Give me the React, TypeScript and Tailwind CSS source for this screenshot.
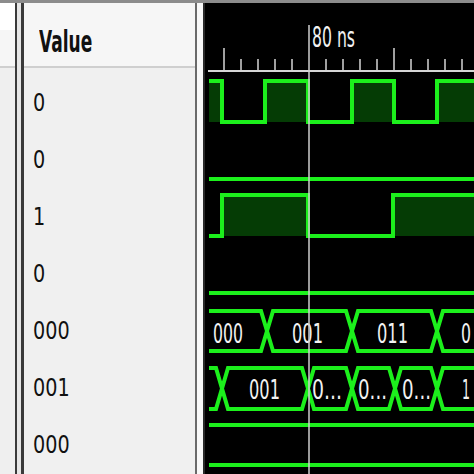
import React from "react";

const values = ["0", "0", "1", "0", "000", "001", "000"];

const GREEN = "#1cf01c";
const FILL = "#053c05";

// bus helper: two polylines that swap level at every crossing, forming the X shapes
const busPath = (top: number, bot: number, start: number, end: number, xs: number[]) => {
  const h = 6;
  const line = (first: number, second: number) => {
    let cur = first;
    let other = second;
    let d = `M${start} ${cur} `;
    xs.forEach((c) => {
      d += `H${c - h} L${c + h} ${other} `;
      [cur, other] = [other, cur];
    });
    return d + `H${end} `;
  };
  return line(top, bot) + line(bot, top);
};

const Waves = () => {
  const ticks = Array.from({ length: 15 }, (_, k) => 224 + 17 * k);
  return (
    <svg width={269} height={471} viewBox="205 3 269 471" className="block">
      {/* ruler */}
      <line x1={208} y1={71} x2={474} y2={71} stroke="#d6d6d6" strokeWidth={2} />
      {ticks.map((x, k) =>
        k === 5 ? null : (
          <line
            key={x}
            x1={x}
            y1={k === 0 || k === 10 ? 48 : 59}
            x2={x}
            y2={71}
            stroke="#d6d6d6"
            strokeWidth={1.5}
          />
        )
      )}

      {/* row 1 clock */}
      {[
        [209, 222],
        [265, 308],
        [352, 394],
        [437, 474],
      ].map(([a, b]) => (
        <rect key={a} x={a} y={81} width={b - a} height={41} fill={FILL} />
      ))}
      <path
        d="M209 81 H222 V122 H265 V81 H308 V122 H352 V81 H394 V122 H437 V81 H474"
        fill="none"
        stroke={GREEN}
        strokeWidth={4}
      />

      {/* row 2 */}
      <line x1={209} y1={179} x2={474} y2={179} stroke={GREEN} strokeWidth={4} />

      {/* row 3 */}
      <rect x={222} y={195} width={86} height={41} fill={FILL} />
      <rect x={393} y={195} width={81} height={41} fill={FILL} />
      <path
        d="M209 236 H222 V195 H308 V236 H393 V195 H474"
        fill="none"
        stroke={GREEN}
        strokeWidth={4}
      />

      {/* row 4 */}
      <line x1={209} y1={293} x2={474} y2={293} stroke={GREEN} strokeWidth={4} />

      {/* row 5 bus */}
      <path d={busPath(311, 351, 209, 474, [267, 352, 437])} fill="none" stroke={GREEN} strokeWidth={4} />
      {/* row 6 bus */}
      <path d={busPath(368, 409, 209, 474, [222, 308, 352, 395, 437])} fill="none" stroke={GREEN} strokeWidth={4} />
      {/* row 7 */}
      <line x1={209} y1={425} x2={474} y2={425} stroke={GREEN} strokeWidth={4} />
      <line x1={209} y1={465} x2={474} y2={465} stroke={GREEN} strokeWidth={4} />

      <g fill="#f2f2f2" fontFamily="'DejaVu Sans', sans-serif" fontSize={26}>
        <text x={213} y={343} textLength={30} lengthAdjust="spacingAndGlyphs">000</text>
        <text x={292} y={343} textLength={31} lengthAdjust="spacingAndGlyphs">001</text>
        <text x={377} y={343} textLength={31} lengthAdjust="spacingAndGlyphs">011</text>
        <text x={461} y={343} textLength={10} lengthAdjust="spacingAndGlyphs">0</text>

        <text x={249} y={399} textLength={31} lengthAdjust="spacingAndGlyphs">001</text>
        <text x={312} y={399} textLength={30} lengthAdjust="spacingAndGlyphs">0...</text>
        <text x={358} y={399} textLength={29} lengthAdjust="spacingAndGlyphs">0...</text>
        <text x={402} y={399} textLength={29} lengthAdjust="spacingAndGlyphs">0...</text>
        <text x={462} y={399} textLength={8} lengthAdjust="spacingAndGlyphs">1</text>

        <text x={312} y={47} fontSize={28} textLength={43} lengthAdjust="spacingAndGlyphs">80 ns</text>
      </g>

      {/* cursor */}
      <line x1={309} y1={25} x2={309} y2={474} stroke="#cfcfcf" strokeWidth={1.5} />
    </svg>
  );
};

export default function App() {
  return (
    <div className="w-[474px] h-[474px] overflow-hidden bg-[#f0f0f0] flex flex-col" style={{ fontFamily: "'DejaVu Sans', sans-serif" }}>
      <div className="h-[3px] bg-[#8c8c8c]" />
      <div className="flex flex-1">
        {/* name column (mostly cut off) */}
        <div className="w-[15px] flex flex-col">
          <div className="h-[27px] bg-white" />
          <div className="h-[38px] bg-[#f6f6f6] border-b-2 border-[#cfcfcf]" />
          <div className="flex-1 bg-[#efefef]" />
        </div>
        {/* splitter */}
        <div className="w-[2px] bg-[#3a3a3a]" />
        <div className="w-[4px] bg-[#e6e6e6]" />
        <div className="w-[3px] bg-[#3a3a3a]" />

        {/* value column */}
        <div className="w-[171px] flex flex-col">
          <div className="h-[65px] bg-[#f6f6f6] border-b-2 border-[#cfcfcf] flex items-end pl-[15px] pb-[9px]">
            <span className="inline-block origin-left scale-x-[0.55] text-[31px] leading-none font-bold text-[#111]">
              Value
            </span>
          </div>
          <div className="flex-1 bg-[#f0f0f0] pt-[6px]">
            {values.map((v, i) => (
              <div key={i} className="h-[57px] flex items-center pl-[9px]">
                <span className="inline-block origin-left scale-x-[0.8] text-[24px] leading-none text-[#111]">
                  {v}
                </span>
              </div>
            ))}
          </div>
        </div>

        {/* splitter */}
        <div className="w-[2px] bg-[#6a6a6a]" />
        <div className="w-[6px] bg-[#f8f8f8]" />
        <div className="w-[2px] bg-[#2a2a2a]" />

        {/* waveform */}
        <div className="flex-1 bg-black">
          <Waves />
        </div>
      </div>
    </div>
  );
}
